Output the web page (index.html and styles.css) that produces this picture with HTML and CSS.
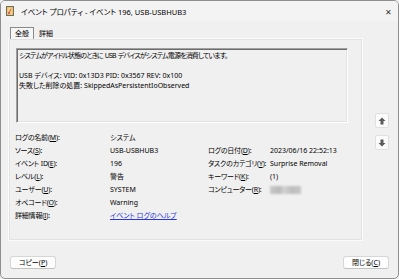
FILE: index.html
```html
<!DOCTYPE html>
<html lang="ja">
<head>
<meta charset="utf-8">
<link rel="stylesheet" href="styles.css">
</head>
<body>
<div class="window">
  <div class="titlebar">
    <svg class="appicon" width="8" height="10" viewBox="0 0 8 10">
      <rect x="0.5" y="0.5" width="7" height="9" fill="#e9b640" stroke="#6d6d6d"/>
      <rect x="1.5" y="1.5" width="5" height="7" fill="#f6d57a"/>
      <path d="M3 6 L5 2.5 L5.5 3 L3.6 6.6 Z" fill="#d2356a"/>
      <circle cx="3" cy="7" r="0.9" fill="#c92a5f"/>
    </svg>
    <span class="title">イベント プロパティ - イベント 196, USB-USBHUB3</span>
    <span class="close">✕</span>
  </div>
  <div class="tabs">
    <span class="tab active">全般</span>
    <span class="tab">詳細</span>
  </div>
  <div class="main">
    <div class="panel">
      <div class="desc">
        <div class="line tight">システムがアイドル状態のときに USB デバイスがシステム電源を消費しています。</div>
        <div class="line">&nbsp;</div>
        <div class="line">USB デバイス: VID: 0x13D3 PID: 0x3567 REV: 0x100</div>
        <div class="line">失敗した削除の処置: SkippedAsPersistentIoObserved</div>
      </div>
      <div class="fields">
        <span class="lbl">ログの名前(<u>M</u>):</span><span class="val">システム</span><span></span><span></span>
        <span class="lbl">ソース(<u>S</u>):</span><span class="val">USB-USBHUB3</span><span class="lbl">ログの日付(<u>D</u>):</span><span class="val">2023/06/16 22:52:13</span>
        <span class="lbl">イベント ID(<u>E</u>):</span><span class="val">196</span><span class="lbl">タスクのカテゴリ(<u>Y</u>):</span><span class="val">Surprise Removal</span>
        <span class="lbl">レベル(<u>L</u>):</span><span class="val">警告</span><span class="lbl">キーワード(<u>K</u>):</span><span class="val">(1)</span>
        <span class="lbl">ユーザー(<u>U</u>):</span><span class="val">SYSTEM</span><span class="lbl">コンピューター(<u>R</u>):</span><span class="val"><span class="blur"></span></span>
        <span class="lbl">オペコード(<u>O</u>):</span><span class="val">Warning</span><span></span><span></span>
        <span class="lbl">詳細情報(<u>I</u>):</span><span class="val"><a class="link" href="#">イベント ログのヘルプ</a></span><span></span><span></span>
      </div>
    </div>
    <div class="side">
      <span class="arrow">
        <svg width="8" height="8" viewBox="0 0 8 8"><path d="M4 0.5 L7.5 4 L5.5 4 L5.5 7.5 L2.5 7.5 L2.5 4 L0.5 4 Z" fill="#5a5a5a"/></svg>
      </span>
      <span class="arrow">
        <svg width="8" height="8" viewBox="0 0 8 8"><path d="M4 7.5 L7.5 4 L5.5 4 L5.5 0.5 L2.5 0.5 L2.5 4 L0.5 4 Z" fill="#5a5a5a"/></svg>
      </span>
    </div>
  </div>
  <div class="footer">
    <span class="btn">コピー(<u>P</u>)</span>
    <span class="btn">閉じる(<u>C</u>)</span>
  </div>
</div>
</body>
</html>
```
FILE: styles.css
```css
html, body {
  margin: 0;
  padding: 0;
  background: #f0f0f0;
}
.window {
  width: 399px;
  height: 279px;
  box-sizing: border-box;
  border: 1px solid #8f8f8f;
  border-radius: 5px;
  background: #f0f0f0;
  display: flex;
  flex-direction: column;
  font-family: "Noto Sans", "Noto Sans CJK JP", sans-serif;
  font-size: 7px;
  font-feature-settings: "palt";
  color: #000;
  overflow: hidden;
}
.titlebar {
  height: 20px;
  flex: none;
  display: flex;
  align-items: center;
  padding-left: 5px;
  background: #f3f3f3;
}
.appicon {
  flex: none;
  margin-right: 7px;
}
.title {
  font-size: 7.5px;
  flex: 1;
}
.close {
  font-size: 8px;
  color: #333;
  margin-right: 6px;
}
.tabs {
  flex: none;
  display: flex;
  align-items: flex-end;
  height: 17px;
  padding-left: 9px;
  position: relative;
  z-index: 1;
}
.tab {
  padding: 0 4px;
  height: 11px;
  line-height: 11px;
  margin-right: 1px;
  margin-bottom: -1px;
}
.tab.active {
  border: 1px solid #8a8a8a;
  border-bottom: none;
  background: #f7f7f7;
  height: 11px;
}
.main {
  flex: none;
  display: flex;
  padding-left: 7px;
}
.panel {
  width: 355px;
  height: 203px;
  box-sizing: border-box;
  border: 1px solid #fbfbfb;
  outline: 1px solid #e2e2e2;
  outline-offset: -2px;
  padding: 9px 14px 0 6px;
}
.desc {
  height: 75px;
  box-sizing: border-box;
  border: 1px solid;
  border-color: #a0a0a0 #ffffff #ffffff #a0a0a0;
  box-shadow: inset 1px 1px 0 #6c6c6c, inset -1px -1px 0 #e3e3e3;
  padding: 2px 2px 0 2px;
  margin-left: 1px;
}
.line {
  height: 10px;
  line-height: 10px;
  white-space: nowrap;
}
.line.tight {
  letter-spacing: -0.85px;
  word-spacing: 1px;
}
.fields {
  display: grid;
  grid-template-columns: 95px 98px 62px 1fr;
  grid-auto-rows: 13px;
  align-items: center;
  margin-top: 8px;
}
.lbl, .val {
  white-space: nowrap;
  line-height: 10px;
}
.lbl {
  letter-spacing: -0.2px;
}
.blur {
  display: inline-block;
  width: 31px;
  height: 8px;
  vertical-align: middle;
  background: linear-gradient(90deg, #c9c9c9 0%, #b9b9b9 30%, #d3d3d3 45%, #bdbdbd 70%, #c7c7c7 100%);
  filter: blur(0.8px);
}
.link {
  color: #2c36d8;
  text-decoration: underline;
}
.side {
  display: flex;
  flex-direction: column;
  gap: 7px;
  padding-top: 75px;
  padding-left: 12px;
}
.arrow {
  width: 14px;
  height: 15px;
  box-sizing: border-box;
  background: #fbfbfb;
  border: 1px solid #e0e0e0;
  border-radius: 2px;
  display: flex;
  align-items: center;
  justify-content: center;
}
.footer {
  flex: none;
  display: flex;
  justify-content: space-between;
  padding: 15px 9px 0 9px;
}
.btn {
  width: 46px;
  height: 13px;
  box-sizing: border-box;
  background: #fdfdfd;
  border: 1px solid #d6d6d6;
  border-bottom-color: #c2c2c2;
  border-radius: 3px;
  display: flex;
  align-items: center;
  justify-content: center;
  line-height: 10px;
}
```
